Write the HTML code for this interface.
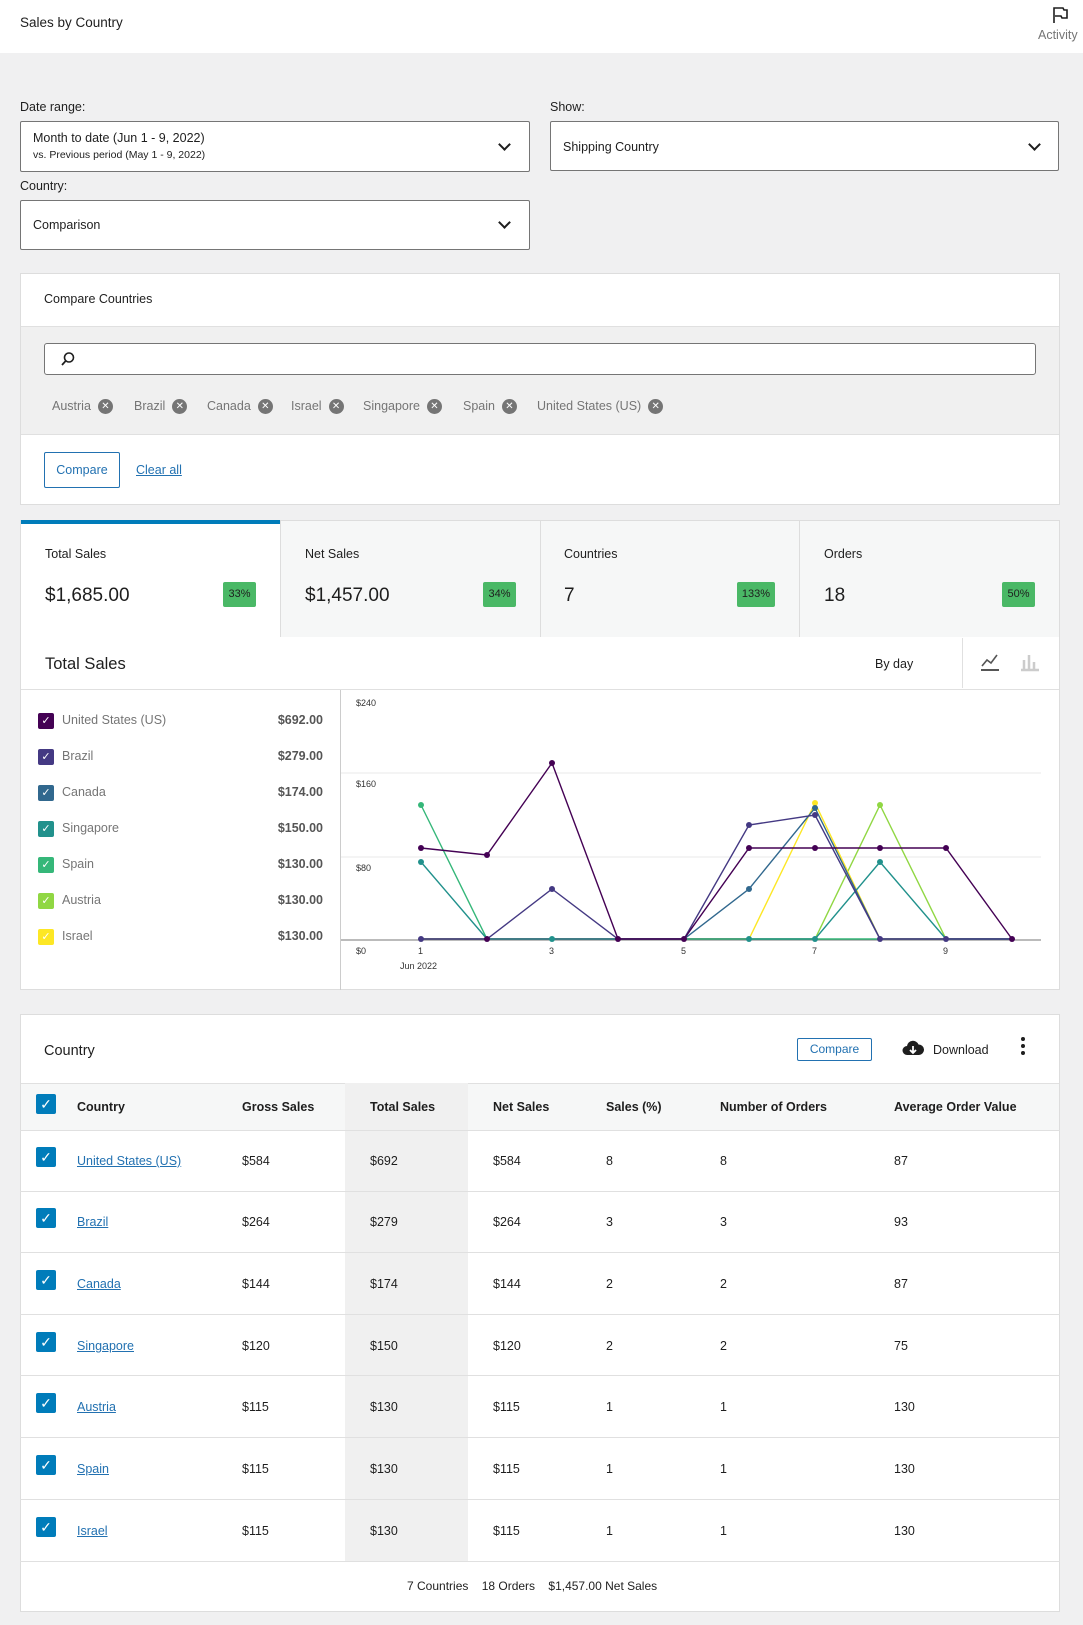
<!DOCTYPE html>
<html><head><meta charset="utf-8"><style>
*{box-sizing:border-box;margin:0;padding:0}
body{width:1083px;height:1625px;background:#f0f0f1;font-family:"Liberation Sans",sans-serif;color:#1e1e1e;position:relative;overflow:hidden;font-size:12.5px}
.a{position:absolute}
.box{position:absolute;background:#fff;border:1px solid #757575;border-radius:2px}
.chev{position:absolute;width:9px;height:9px;border-right:2px solid #1e1e1e;border-bottom:2px solid #1e1e1e;transform:rotate(45deg)}
.chip{position:absolute;top:399px;color:#757575;font-size:12.5px}
.x{display:inline-block;width:15px;height:15px;border-radius:50%;background:#757575;color:#fff;font-size:10px;line-height:15px;text-align:center;margin-left:7px;vertical-align:1px}
.lab{font-size:12.5px;color:#1e1e1e}
.badge{position:absolute;top:582px;height:25px;background:#4ab866;border-radius:2px;font-size:11px;line-height:25px;text-align:center;color:#1e1e1e}
.cb{position:absolute;width:16px;height:16px;border-radius:2px;color:#fff;font-size:11px;line-height:16px;text-align:center}
.lg{position:absolute;left:62px;font-size:12.5px;color:#757575}
.lv{position:absolute;right:760px;font-size:12.5px;font-weight:bold;color:#555;text-align:right}
.tcb{position:absolute;left:36px;width:20px;height:20px;background:#007cba;border-radius:2px;color:#fff;font-size:14px;line-height:20px;text-align:center}
.row{position:absolute;left:20px;width:1040px;border-top:1px solid #e0e0e0}
.c{position:absolute;font-size:12.5px}
a{color:#2271b1}
</style></head><body>
<div class="a" style="left:0;top:0;width:1083px;height:53px;background:#fff"></div>
<div class="a" style="left:20px;top:15px;font-size:13.5px">Sales by Country</div>
<svg class="a" style="left:1051px;top:6px" width="18" height="18" viewBox="0 0 18 18"><path d="M3 17V2h9l1 2h3v8h-5l-1-2H4" fill="none" stroke="#1e1e1e" stroke-width="1.6"/></svg>
<div class="a" style="left:1038px;top:28px;font-size:12.5px;color:#757575">Activity</div>

<div class="a lab" style="left:20px;top:100px">Date range:</div>
<div class="box" style="left:20px;top:121px;width:510px;height:51px"></div>
<div class="a" style="left:33px;top:131px;font-size:12.5px">Month to date (Jun 1 - 9, 2022)</div>
<div class="a" style="left:33px;top:149px;font-size:10.5px">vs. Previous period (May 1 - 9, 2022)</div>
<div class="chev" style="left:500px;top:140px"></div>
<div class="a lab" style="left:550px;top:100px">Show:</div>
<div class="box" style="left:550px;top:121px;width:509px;height:50px"></div>
<div class="a" style="left:563px;top:140px">Shipping Country</div>
<div class="chev" style="left:1030px;top:140px"></div>
<div class="a lab" style="left:20px;top:179px">Country:</div>
<div class="box" style="left:20px;top:200px;width:510px;height:50px"></div>
<div class="a" style="left:33px;top:218px">Comparison</div>
<div class="chev" style="left:500px;top:218px"></div>

<div class="a" style="left:20px;top:273px;width:1040px;height:232px;background:#fff;border:1px solid #ddd"></div>
<div class="a" style="left:44px;top:292px;font-size:12.5px">Compare Countries</div>
<div class="a" style="left:21px;top:326px;width:1038px;height:109px;background:#f0f0f0;border-top:1px solid #e0e0e0;border-bottom:1px solid #e0e0e0"></div>
<div class="box" style="left:44px;top:343px;width:992px;height:32px;border-radius:3px"></div>
<svg class="a" style="left:60px;top:351px" width="16" height="16" viewBox="0 0 16 16"><circle cx="9" cy="6.5" r="4.5" fill="none" stroke="#1e1e1e" stroke-width="1.6"/><path d="M5.8 9.8L2 14" stroke="#1e1e1e" stroke-width="1.8"/></svg>
<div class="chip" style="left:52px">Austria<span class="x">✕</span></div>
<div class="chip" style="left:134px">Brazil<span class="x">✕</span></div>
<div class="chip" style="left:207px">Canada<span class="x">✕</span></div>
<div class="chip" style="left:291px">Israel<span class="x">✕</span></div>
<div class="chip" style="left:363px">Singapore<span class="x">✕</span></div>
<div class="chip" style="left:463px">Spain<span class="x">✕</span></div>
<div class="chip" style="left:537px">United States (US)<span class="x">✕</span></div>
<div class="a" style="left:44px;top:452px;width:76px;height:36px;border:1px solid #2271b1;border-radius:2px;color:#2271b1;line-height:34px;text-align:center">Compare</div>
<div class="a" style="left:136px;top:463px"><a style="text-decoration:underline">Clear all</a></div>

<div class="a" style="left:20px;top:520px;width:1040px;height:118px;background:#f6f7f7;border:1px solid #ddd"></div>
<div class="a" style="left:21px;top:520px;width:259px;height:117px;background:#fff"></div>
<div class="a" style="left:21px;top:520px;width:259px;height:4px;background:#007cba"></div>
<div class="a" style="left:280px;top:521px;width:1px;height:116px;background:#ddd"></div>
<div class="a" style="left:540px;top:521px;width:1px;height:116px;background:#ddd"></div>
<div class="a" style="left:799px;top:521px;width:1px;height:116px;background:#ddd"></div>
<div class="a" style="left:45px;top:547px">Total Sales</div>
<div class="a" style="left:305px;top:547px">Net Sales</div>
<div class="a" style="left:564px;top:547px">Countries</div>
<div class="a" style="left:824px;top:547px">Orders</div>
<div class="a" style="left:45px;top:585px;font-size:19px">$1,685.00</div>
<div class="a" style="left:305px;top:585px;font-size:19px">$1,457.00</div>
<div class="a" style="left:564px;top:585px;font-size:19px">7</div>
<div class="a" style="left:824px;top:585px;font-size:19px">18</div>
<div class="badge" style="left:223px;width:33px">33%</div>
<div class="badge" style="left:483px;width:33px">34%</div>
<div class="badge" style="left:737px;width:38px">133%</div>
<div class="badge" style="left:1002px;width:33px">50%</div>

<div class="a" style="left:20px;top:637px;width:1040px;height:353px;background:#fff;border:1px solid #ddd;border-top:none"></div>
<div class="a" style="left:45px;top:655px;font-size:16.5px">Total Sales</div>
<div class="a" style="left:875px;top:657px">By day</div>
<div class="a" style="left:962px;top:638px;width:1px;height:50px;background:#e0e0e0"></div>
<svg class="a" style="left:980px;top:652px" width="20" height="20"><path d="M2 14l5-6 4 3 6-8" fill="none" stroke="#555" stroke-width="1.6"/><path d="M1 18h18" stroke="#555" stroke-width="2"/></svg>
<svg class="a" style="left:1020px;top:652px" width="20" height="20"><path d="M4 8v10M9 3v15M14 10v8M1 18h18" stroke="#ccc" stroke-width="2.5"/></svg>
<div class="a" style="left:21px;top:689px;width:1038px;height:1px;background:#e0e0e0"></div>
<div class="a" style="left:340px;top:690px;width:1px;height:300px;background:#ccc"></div>

<div class="cb" style="left:38px;top:713px;background:#440154">✓</div><div class="lg" style="top:713px">United States (US)</div><div class="lv" style="top:713px">$692.00</div>
<div class="cb" style="left:38px;top:749px;background:#443983">✓</div><div class="lg" style="top:749px">Brazil</div><div class="lv" style="top:749px">$279.00</div>
<div class="cb" style="left:38px;top:785px;background:#31688e">✓</div><div class="lg" style="top:785px">Canada</div><div class="lv" style="top:785px">$174.00</div>
<div class="cb" style="left:38px;top:821px;background:#21918c">✓</div><div class="lg" style="top:821px">Singapore</div><div class="lv" style="top:821px">$150.00</div>
<div class="cb" style="left:38px;top:857px;background:#35b779">✓</div><div class="lg" style="top:857px">Spain</div><div class="lv" style="top:857px">$130.00</div>
<div class="cb" style="left:38px;top:893px;background:#90d743">✓</div><div class="lg" style="top:893px">Austria</div><div class="lv" style="top:893px">$130.00</div>
<div class="cb" style="left:38px;top:929px;background:#fde725">✓</div><div class="lg" style="top:929px">Israel</div><div class="lv" style="top:929px">$130.00</div>

<svg class="a" style="left:0;top:0" width="1083" height="1000" font-family="Liberation Sans" font-size="9" fill="#333">
<path d="M341 773H1041M341 857H1041" stroke="#e8e8e8"/>
<path d="M341 940H1041" stroke="#777"/>
<text x="356" y="706">$240</text><text x="356" y="787">$160</text><text x="356" y="871">$80</text><text x="356" y="954">$0</text>
<text x="418" y="954">1</text><text x="549" y="954">3</text><text x="681" y="954">5</text><text x="812" y="954">7</text><text x="943" y="954">9</text>
<text x="400" y="969">Jun 2022</text>
<g fill="none" stroke-width="1.4">
<polyline stroke="#35b779" points="421,805 487,939 552,939 618,939 684,939 749,939 815,939 880,939 946,939 1012,939"/>
<polyline stroke="#90d743" points="421,939 487,939 552,939 618,939 684,939 749,939 815,939 880,805 946,939 1012,939"/>
<polyline stroke="#fde725" points="421,939 487,939 552,939 618,939 684,939 749,939 815,803 880,939 946,939 1012,939"/>
<polyline stroke="#21918c" points="421,862 487,939 552,939 618,939 684,939 749,939 815,939 880,862 946,939 1012,939"/>
<polyline stroke="#31688e" points="421,939 487,939 552,939 618,939 684,939 749,889 815,808 880,939 946,939 1012,939"/>
<polyline stroke="#443983" points="421,939 487,939 552,889 618,939 684,939 749,825 815,815 880,939 946,939 1012,939"/>
<polyline stroke="#440154" points="421,848 487,855 552,763 618,939 684,939 749,848 815,848 880,848 946,848 1012,939"/>
</g>
<g fill="#35b779"><circle cx="421" cy="805" r="3"/></g>
<g fill="#90d743"><circle cx="880" cy="805" r="3"/></g>
<g fill="#fde725"><circle cx="815" cy="803" r="3"/></g>
<g fill="#21918c"><circle cx="421" cy="862" r="3"/><circle cx="880" cy="862" r="3"/><circle cx="749" cy="939" r="3"/><circle cx="815" cy="939" r="3"/><circle cx="552" cy="939" r="3"/></g>
<g fill="#31688e"><circle cx="749" cy="889" r="3"/><circle cx="815" cy="808" r="3"/></g>
<g fill="#443983"><circle cx="421" cy="939" r="3"/><circle cx="552" cy="889" r="3"/><circle cx="749" cy="825" r="3"/><circle cx="815" cy="815" r="3"/><circle cx="880" cy="939" r="3"/><circle cx="946" cy="939" r="3"/></g>
<g fill="#440154"><circle cx="421" cy="848" r="3"/><circle cx="487" cy="855" r="3"/><circle cx="552" cy="763" r="3"/><circle cx="618" cy="939" r="3"/><circle cx="684" cy="939" r="3"/><circle cx="749" cy="848" r="3"/><circle cx="815" cy="848" r="3"/><circle cx="880" cy="848" r="3"/><circle cx="946" cy="848" r="3"/><circle cx="1012" cy="939" r="3"/><circle cx="487" cy="939" r="3"/></g>
</svg>

<div class="a" style="left:20px;top:1014px;width:1040px;height:598px;background:#fff;border:1px solid #ddd"></div>
<div class="a" style="left:44px;top:1043px;font-size:14.5px">Country</div>
<div class="a" style="left:797px;top:1038px;width:75px;height:23px;border:1px solid #2271b1;border-radius:2px;color:#2271b1;font-size:12px;line-height:21px;text-align:center">Compare</div>
<svg class="a" style="left:902px;top:1040px" width="22" height="18" viewBox="0 0 22 18"><path d="M5 15a4.5 4.5 0 0 1 0-9 6 6 0 0 1 11.5-1.5A5 5 0 0 1 17 15z" fill="#1e1e1e"/><path d="M11 6v7M8 10l3 3 3-3" stroke="#fff" stroke-width="1.8" fill="none"/></svg>
<div class="a" style="left:933px;top:1043px;font-size:12.5px">Download</div>
<div class="a" style="left:1021px;top:1037px;width:4px;height:4px;border-radius:50%;background:#1e1e1e;box-shadow:0 7px 0 #1e1e1e,0 14px 0 #1e1e1e"></div>

<div class="a" style="left:21px;top:1083px;width:1038px;height:47px;background:#f6f7f7;border-top:1px solid #e0e0e0"></div>
<div class="a" style="left:345px;top:1083px;width:123px;height:478px;background:#f0f0f0"></div>
<div class="tcb" style="top:1094px">✓</div>
<div class="c" style="left:77px;top:1100px;font-weight:bold">Country</div>
<div class="c" style="left:242px;top:1100px;font-weight:bold">Gross Sales</div>
<div class="c" style="left:370px;top:1100px;font-weight:bold">Total Sales</div>
<div class="c" style="left:493px;top:1100px;font-weight:bold">Net Sales</div>
<div class="c" style="left:606px;top:1100px;font-weight:bold">Sales (%)</div>
<div class="c" style="left:720px;top:1100px;font-weight:bold">Number of Orders</div>
<div class="c" style="left:894px;top:1100px;font-weight:bold">Average Order Value</div>

<div class="row" style="top:1130px"></div><div class="row" style="top:1191px"></div><div class="row" style="top:1252px"></div><div class="row" style="top:1314px"></div><div class="row" style="top:1375px"></div><div class="row" style="top:1437px"></div><div class="row" style="top:1499px"></div><div class="row" style="top:1561px"></div>

<div class="tcb" style="top:1147px">✓</div><div class="c" style="left:77px;top:1154px"><a style="text-decoration:underline">United States (US)</a></div><div class="c" style="left:242px;top:1154px">$584</div><div class="c" style="left:370px;top:1154px">$692</div><div class="c" style="left:493px;top:1154px">$584</div><div class="c" style="left:606px;top:1154px">8</div><div class="c" style="left:720px;top:1154px">8</div><div class="c" style="left:894px;top:1154px">87</div>
<div class="tcb" style="top:1208px">✓</div><div class="c" style="left:77px;top:1215px"><a style="text-decoration:underline">Brazil</a></div><div class="c" style="left:242px;top:1215px">$264</div><div class="c" style="left:370px;top:1215px">$279</div><div class="c" style="left:493px;top:1215px">$264</div><div class="c" style="left:606px;top:1215px">3</div><div class="c" style="left:720px;top:1215px">3</div><div class="c" style="left:894px;top:1215px">93</div>
<div class="tcb" style="top:1270px">✓</div><div class="c" style="left:77px;top:1277px"><a style="text-decoration:underline">Canada</a></div><div class="c" style="left:242px;top:1277px">$144</div><div class="c" style="left:370px;top:1277px">$174</div><div class="c" style="left:493px;top:1277px">$144</div><div class="c" style="left:606px;top:1277px">2</div><div class="c" style="left:720px;top:1277px">2</div><div class="c" style="left:894px;top:1277px">87</div>
<div class="tcb" style="top:1332px">✓</div><div class="c" style="left:77px;top:1339px"><a style="text-decoration:underline">Singapore</a></div><div class="c" style="left:242px;top:1339px">$120</div><div class="c" style="left:370px;top:1339px">$150</div><div class="c" style="left:493px;top:1339px">$120</div><div class="c" style="left:606px;top:1339px">2</div><div class="c" style="left:720px;top:1339px">2</div><div class="c" style="left:894px;top:1339px">75</div>
<div class="tcb" style="top:1393px">✓</div><div class="c" style="left:77px;top:1400px"><a style="text-decoration:underline">Austria</a></div><div class="c" style="left:242px;top:1400px">$115</div><div class="c" style="left:370px;top:1400px">$130</div><div class="c" style="left:493px;top:1400px">$115</div><div class="c" style="left:606px;top:1400px">1</div><div class="c" style="left:720px;top:1400px">1</div><div class="c" style="left:894px;top:1400px">130</div>
<div class="tcb" style="top:1455px">✓</div><div class="c" style="left:77px;top:1462px"><a style="text-decoration:underline">Spain</a></div><div class="c" style="left:242px;top:1462px">$115</div><div class="c" style="left:370px;top:1462px">$130</div><div class="c" style="left:493px;top:1462px">$115</div><div class="c" style="left:606px;top:1462px">1</div><div class="c" style="left:720px;top:1462px">1</div><div class="c" style="left:894px;top:1462px">130</div>
<div class="tcb" style="top:1517px">✓</div><div class="c" style="left:77px;top:1524px"><a style="text-decoration:underline">Israel</a></div><div class="c" style="left:242px;top:1524px">$115</div><div class="c" style="left:370px;top:1524px">$130</div><div class="c" style="left:493px;top:1524px">$115</div><div class="c" style="left:606px;top:1524px">1</div><div class="c" style="left:720px;top:1524px">1</div><div class="c" style="left:894px;top:1524px">130</div>

<div class="c" style="left:407px;top:1579px;font-size:12px">7 Countries &nbsp;&nbsp; 18 Orders &nbsp;&nbsp; $1,457.00 Net Sales</div>
</body></html>
